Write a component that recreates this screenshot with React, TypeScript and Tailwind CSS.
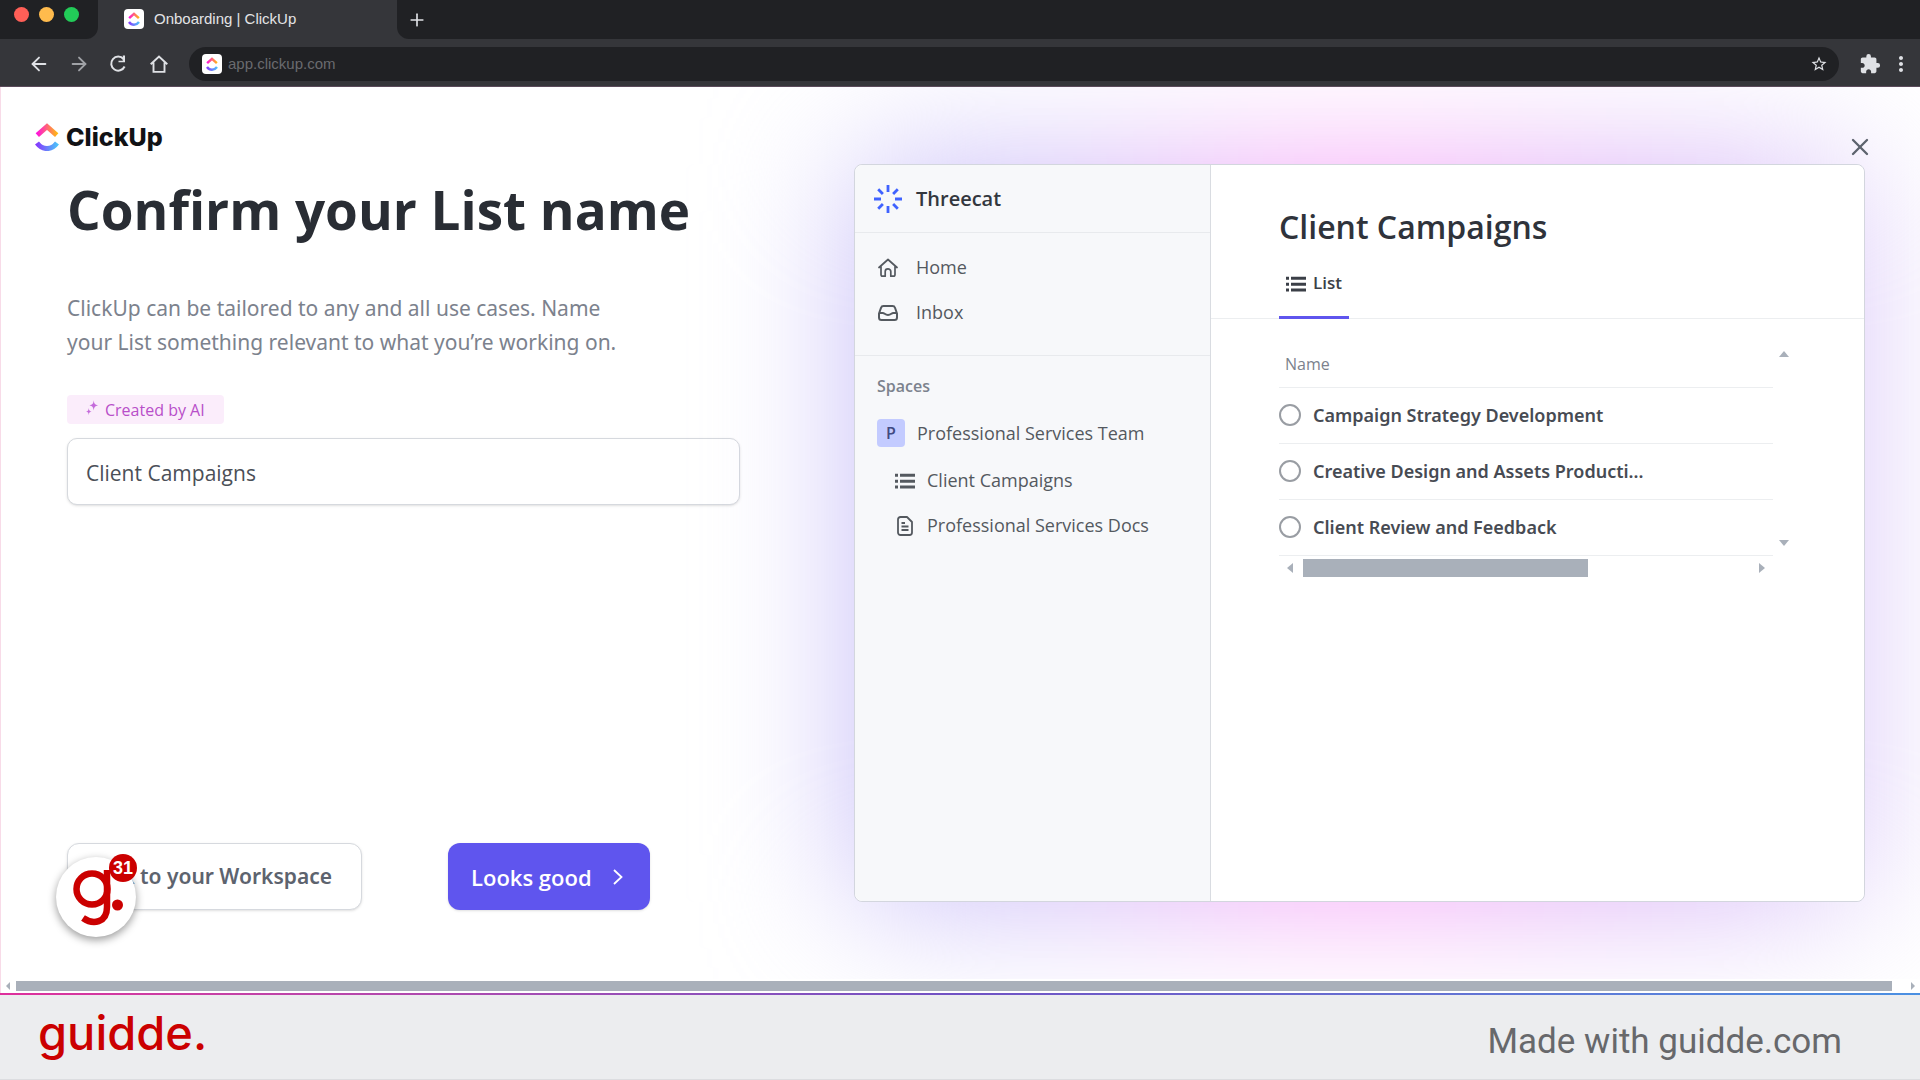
import type { ReactNode } from "react";
import { ArrowLeft, ArrowRight, Plus, X } from "lucide-react";
import { MdExtension, MdMoreVert, MdStarBorder } from "react-icons/md";

const tasks = [
  "Campaign Strategy Development",
  "Creative Design and Assets Producti...",
  "Client Review and Feedback",
];

function ClickUpMark({ id, className }: { id: string; className?: string }) {
  return (
    <svg viewBox="0 0 24 28" className={className} fill="none" aria-hidden="true">
      <defs>
        <linearGradient id={`${id}-top`} x1="0" y1="0" x2="24" y2="0" gradientUnits="userSpaceOnUse">
          <stop stopColor="#ff02f0" />
          <stop offset="1" stopColor="#ffc800" />
        </linearGradient>
        <linearGradient id={`${id}-bottom`} x1="0" y1="0" x2="24" y2="0" gradientUnits="userSpaceOnUse">
          <stop stopColor="#8930fd" />
          <stop offset="1" stopColor="#49ccf9" />
        </linearGradient>
      </defs>
      <path d="M2.3 12.2 12 3.6l9.7 8.6" stroke={`url(#${id}-top)`} strokeWidth="5" />
      <path d="M2 20c3 3.900 6.200 5.600 10 5.600s7-1.700 10-5.600" stroke={`url(#${id}-bottom)`} strokeWidth="5" />
    </svg>
  );
}

function Favicon({ id }: { id: string }) {
  return (
    <span className="flex size-5 shrink-0 items-center justify-center rounded-sm bg-white">
      <ClickUpMark id={id} className="h-4 w-3" />
    </span>
  );
}

function ReloadIcon() {
  return (
    <svg viewBox="0 0 18 18" className="size-[18px]" fill="none" stroke="currentColor" strokeWidth="2" aria-hidden="true">
      <path d="M14.500 4A7 7 0 1 0 15.600 11.500" />
      <path d="M16 .5v6.700H9.500v-1.500h4.300V.5z" fill="currentColor" stroke="none" />
    </svg>
  );
}

function BrowserHomeIcon() {
  return (
    <svg viewBox="0 0 18 18" className="size-[18px]" fill="none" stroke="currentColor" strokeWidth="1.900" aria-hidden="true">
      <path d="M.7 9.300 9 1.500l8.300 7.800M3.500 7.500v9.400h11V7.500" />
    </svg>
  );
}

function ListIcon({ className }: { className?: string }) {
  return (
    <svg viewBox="0 0 20 16" className={className} fill="currentColor" aria-hidden="true">
      <path d="M0 .7h3v3H0zM0 6.700h3v3H0zM0 12.500h3v3H0zM5 .7h15v3H5zM5 6.700h15v3H5zM5 12.500h15v3H5z" />
    </svg>
  );
}

function HomeIcon() {
  return (
    <svg viewBox="0 0 20 20" className="size-5" fill="none" stroke="currentColor" strokeWidth="1.700" strokeLinejoin="round" strokeLinecap="round" aria-hidden="true">
      <path d="M1 9.500 10 1.500l9 8M3 8.500v8c0 1 .6 1.700 1.600 1.700h2.600v-4.700c0-3.400 5.600-3.400 5.600 0v4.700h2.600c1 0 1.600-.7 1.600-1.700v-8" />
    </svg>
  );
}

function InboxIcon() {
  return (
    <svg viewBox="0 0 20 20" className="size-5" fill="none" stroke="currentColor" strokeWidth="2" strokeLinejoin="round" aria-hidden="true">
      <path d="M1 10.500 3 4.800c.4-1.200 1.300-1.800 2.500-1.800h9c1.200 0 2.100.6 2.500 1.800l2 5.700v4c0 1.500-1 2.500-2.500 2.500h-13C2 17 1 16 1 14.500zM1.200 10h3.600c1.700 0 2.200 2 5.200 2s3.500-2 5.200-2h3.600" />
    </svg>
  );
}

function DocIcon() {
  return (
    <svg viewBox="0 0 16 20" className="h-5 w-4" fill="none" stroke="currentColor" strokeWidth="1.800" strokeLinejoin="round" aria-hidden="true">
      <path d="M3.500 1H10l5 5v10.500c0 1.400-1 2.500-2.500 2.500h-9C2 19 1 18 1 16.500v-13C1 2 2 1 3.500 1zM4.500 7H8M4.500 10.500h7M4.500 14h7" />
    </svg>
  );
}

function BurstIcon() {
  return (
    <svg viewBox="0 0 28 28" className="size-7" stroke="#3f62ff" strokeWidth="2.800" aria-hidden="true">
      <path d="M14 0v7M14 21v7M0 14h7M21 14h7M4.200 4.200l4.700 4.700M19.100 19.100l4.700 4.700M4.200 23.800l4.700-4.700M19.100 8.900l4.700-4.700" />
    </svg>
  );
}

function Sparkles() {
  return (
    <svg viewBox="0 0 14 18" className="mb-1 h-4 w-3" fill="#c56bdb" aria-hidden="true">
      <path d="M9 0c.5 4 1.200 5.200 5 6-3.800.8-4.500 2-5 6-.5-4-1.200-5.200-5-6 3.800-.8 4.500-2 5-6zM3.200 9c.3 2.800.9 3.700 3.300 4.200-2.400.5-3 1.400-3.300 4.200C2.900 14.600 2.400 13.700 0 13.200 2.400 12.700 2.900 11.800 3.200 9z" />
    </svg>
  );
}

function Triangle({ points }: { points: string }) {
  return (
    <svg viewBox="0 0 10 10" className="size-2.5 shrink-0" fill="#a9b0ba" aria-hidden="true">
      <polygon points={points} />
    </svg>
  );
}

function BrowserBar() {
  return (
    <header className="h-[87px] shrink-0 border-b border-[#5a4a5a] bg-[#35363a] font-['Liberation_Sans',sans-serif]">
      <div className="flex h-[39px] bg-[#35363a]">
        <div className="flex w-[98px] gap-[10px] rounded-br-xl bg-[#202124] pt-[7px] pl-[14px]">
          <span className="size-[15px] rounded-full bg-[#ff5f57]" />
          <span className="size-[15px] rounded-full bg-[#ffbb4d]" />
          <span className="size-[15px] rounded-full bg-[#22cb58]" />
        </div>
        <div className="flex w-[299px] items-center gap-[10px] pb-px pl-[26px]">
          <Favicon id="tab" />
          <span className="text-[15px] text-[#e3e4e6]">Onboarding | ClickUp</span>
        </div>
        <div className="flex flex-1 items-center rounded-bl-xl bg-[#202124] pl-[10px]">
          <button aria-label="New tab" className="text-[#dfe1e5]">
            <Plus size={20} strokeWidth={2} />
          </button>
        </div>
      </div>
      <div className="flex h-[47px] items-center pt-[3px] pr-[7px] pl-[28px] text-[#dfe1e5]">
        <button aria-label="Back"><ArrowLeft size={22} /></button>
        <button aria-label="Forward" className="ml-[18px] text-[#a0a2a6]"><ArrowRight size={22} /></button>
        <button aria-label="Reload" className="ml-[19px]"><ReloadIcon /></button>
        <button aria-label="Home page" className="ml-[23px]"><BrowserHomeIcon /></button>
        <div className="ml-[21px] flex h-[34px] flex-1 items-center gap-[6px] rounded-full bg-[#202124] pr-[11px] pl-[13px]">
          <Favicon id="url" />
          <input aria-label="Address" defaultValue="app.clickup.com" className="min-w-0 flex-1 bg-transparent text-[15px] text-[#6a6b6f] outline-none" />
          <button aria-label="Bookmark"><MdStarBorder size={18} /></button>
        </div>
        <button aria-label="Extensions" className="ml-[20px]"><MdExtension size={22} /></button>
        <button aria-label="Menu" className="ml-[8px]"><MdMoreVert size={24} /></button>
      </div>
    </header>
  );
}

function NavItem({ icon, label, nested }: { icon: ReactNode; label: string; nested?: boolean }) {
  return (
    <a href="#" className={`flex h-[45px] items-center text-[#54595f] ${nested ? "gap-3 pl-[40px]" : "gap-[18px] pl-[23px]"}`}>
      <span className="flex w-5 justify-center">{icon}</span>
      {label}
    </a>
  );
}

function Sidebar() {
  return (
    <aside className="w-[356px] shrink-0 rounded-l-lg border-r border-[#d9dce1] bg-[#f7f8fa] text-[18px]">
      <div className="flex h-[68px] items-center gap-[14px] border-b border-[#e8eaed] pl-[19px] text-[20px] font-semibold text-[#33373e]">
        <BurstIcon />
        Threecat
      </div>
      <nav aria-label="Main" className="h-[123px] border-b border-[#e8eaed] pt-[12px]">
        <NavItem icon={<HomeIcon />} label="Home" />
        <NavItem icon={<InboxIcon />} label="Inbox" />
      </nav>
      <h2 className="mt-[18px] pl-[22px] text-[16px] leading-6 font-semibold text-[#7c828d]">Spaces</h2>
      <a href="#" className="mt-[20px] flex h-[30px] items-center gap-3 pl-[22px] text-[#54595f]">
        <span className="flex size-7 items-center justify-center rounded bg-[#c3cbff] text-[16px] font-semibold text-[#414a82]">P</span>
        Professional Services Team
      </a>
      <div className="mt-[10px]">
        <NavItem nested icon={<ListIcon className="h-4 w-5" />} label="Client Campaigns" />
        <NavItem nested icon={<DocIcon />} label="Professional Services Docs" />
      </div>
    </aside>
  );
}

function TaskList() {
  return (
    <section className="min-w-0 flex-1 rounded-r-lg bg-white">
      <div className="flex h-[154px] flex-col border-b border-[#eceef0] pl-[68px]">
        <h2 className="mt-[41px] text-[32px] leading-[42px] font-semibold text-[#2f333b]">Client Campaigns</h2>
        <button className="-mb-px mt-auto flex h-[49px] w-[70px] items-start gap-[7px] border-b-3 border-[#5f55ee] pl-[7px] text-[17px] leading-[26px] font-semibold text-[#3b3f47]">
          <ListIcon className="mt-[6px] h-4 w-5" />
          List
        </button>
      </div>
      <div className="flex pt-[22px] pr-[69px] pl-[68px]">
        <div className="min-w-0 flex-1">
          <table className="w-full table-fixed text-left">
            <thead>
              <tr className="h-[46px] border-b border-[#eceef0]">
                <th className="pl-[6px] text-[16px] font-normal text-[#7c828d]">Name</th>
              </tr>
            </thead>
            <tbody>
              {tasks.map((task) => (
                <tr key={task} className="h-[56px] border-b border-[#eceef0]">
                  <td>
                    <label className="flex items-center gap-3 font-['Noto_Sans',sans-serif] text-[18px] font-semibold text-[#474b53]">
                      <input type="checkbox" className="size-[22px] shrink-0 appearance-none rounded-full border-2 border-[#999da3]" />
                      {task}
                    </label>
                  </td>
                </tr>
              ))}
            </tbody>
          </table>
          <div className="flex h-[25px] items-center px-[7px]">
            <Triangle points="7,0 7,10 1,5" />
            <div className="mx-[7px] flex-1">
              <div className="h-[18px] w-[64%] bg-[#a9b0ba]" />
            </div>
            <Triangle points="3,0 3,10 9,5" />
          </div>
        </div>
        <div className="flex h-[215px] w-[22px] flex-col items-center justify-between pt-[8px] pb-[8px]">
          <Triangle points="0,8 10,8 5,2" />
          <Triangle points="0,2 10,2 5,8" />
        </div>
      </div>
    </section>
  );
}

function ListForm() {
  return (
    <section className="flex flex-col pl-[67px]">
      <a href="#" aria-label="ClickUp" className="mt-[31px] -ml-[32px] flex items-center gap-[7px] self-start">
        <ClickUpMark id="logo" className="h-7 w-6" />
        <span className="pt-px font-['Inter',sans-serif] text-[25px] leading-[36px] font-extrabold text-[#111215]">ClickUp</span>
      </a>
      <h1 className="mt-[17px] text-[53px] leading-[76px] font-bold whitespace-nowrap text-[#292d34]">Confirm your List name</h1>
      <p className="mt-[43px] font-['Noto_Sans',sans-serif] text-[21px] leading-[34px] text-[#7c828d]">
        ClickUp can be tailored to any and all use cases. Name
        <br />
        your List something relevant to what you’re working on.
      </p>
      <div className="mt-[36px] flex h-[29px] items-center gap-[7px] self-start rounded bg-[#fbedfb] px-[19px] text-[16px] text-[#b84fc9]">
        <Sparkles />
        Created by AI
      </div>
      <input
        aria-label="List name"
        defaultValue="Client Campaigns"
        className="mt-[14px] mr-[114px] h-[67px] rounded-[10px] border border-[#d6d9de] bg-white px-[18px] pt-[3px] text-[21px] text-[#4b4f57] shadow-sm outline-none"
      />
      <div className="relative mt-auto mb-[69px] flex gap-[86px] text-[21px]">
        <button className="h-[67px] w-[295px] rounded-xl border border-[#d6d9de] bg-white pt-px pr-[29px] text-right font-['Noto_Sans',sans-serif] font-semibold text-[#5d636e] shadow-sm">
          Back to your Workspace
        </button>
        <button className="flex h-[67px] w-[202px] items-center gap-[20px] rounded-xl bg-[#5f55ee] pt-px pl-[23px] text-[22px] font-semibold text-white shadow-sm">
          Looks good
          <svg viewBox="0 0 12 16" className="h-4 w-3" fill="none" stroke="currentColor" strokeWidth="1.800" aria-hidden="true">
            <path d="M2 1l7.500 7L2 15" />
          </svg>
        </button>
        <button aria-label="guidde, 31 steps" className="absolute top-[14px] -left-[11px] size-[80px] rounded-full bg-white shadow-[0_3px_8px_rgba(0,0,0,0.4)]">
          <svg viewBox="0 0 80 80" className="size-full" fill="none" stroke="#cb0000" strokeWidth="6.500" aria-hidden="true">
            <circle cx="36" cy="32" r="15.500" />
            <path d="M51 13v37c0 16-14 18-24 11" />
            <circle cx="61.500" cy="48" r="5.500" fill="#cb0000" stroke="none" />
          </svg>
          <span className="absolute top-[-3px] left-[53px] flex size-7 items-center justify-center rounded-full bg-[#cb0000] font-['Liberation_Sans',sans-serif] text-[18px] font-bold text-white">31</span>
        </button>
      </div>
    </section>
  );
}

function Preview() {
  return (
    <section className="relative pt-[77px] pr-[55px] pb-[77px]">
      <div className="relative h-full">
        <div className="absolute inset-0 rounded-lg bg-[linear-gradient(90deg,#c5bdf8_0%,#cdbef8_20%,#fba4f8_48%,#d6b3f7_80%,#dccff9_100%)] blur-[70px]" />
        <div className="relative flex h-full rounded-lg border border-[#d3d6de] bg-white">
          <Sidebar />
          <TaskList />
        </div>
      </div>
      <button aria-label="Close" className="absolute top-[46px] right-[46px] text-[#5d636e]">
        <X size={28} strokeWidth={2} />
      </button>
    </section>
  );
}

export default function App() {
  return (
    <div className="flex min-h-screen flex-col bg-[#ecedef] font-['Open_Sans','Noto_Sans',sans-serif]">
      <BrowserBar />
      <main className="flex flex-1 flex-col overflow-hidden border-l border-[#f8dbe8] bg-white">
        <div className="-ml-px grid flex-1 grid-cols-[minmax(0,427fr)_minmax(0,533fr)]">
          <ListForm />
          <Preview />
        </div>
        <div className="relative flex h-[14px] items-center bg-white px-[2px]">
          <Triangle points="7,1 7,9 3,5" />
          <div className="ml-[3px] mr-[16px] h-[10px] flex-1 bg-[#a9b0ba]" />
          <Triangle points="3,1 3,9 7,5" />
        </div>
      </main>
      <div className="h-[2px] bg-linear-to-r from-[#de2f9c] via-[#7052c4] to-[#4a90e2]" />
      <footer className="flex h-[85px] items-center justify-between border-b border-[#dcdde0] pr-[78px] pl-[38px]">
        <a href="#" className="pb-[10px] font-['Inter',sans-serif] text-[47px] leading-none font-medium text-[#cb0000]">guidde.</a>
        <p className="pt-[8px] font-['Roboto',sans-serif] text-[35px] leading-none text-[#67686b]">Made with guidde.com</p>
      </footer>
    </div>
  );
}
